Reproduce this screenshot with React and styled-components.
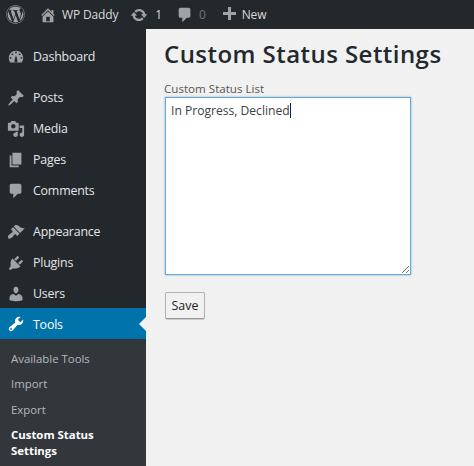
import React from "react";
import styled, { createGlobalStyle } from "styled-components";
import { FaWordpress } from "react-icons/fa";

const Global = createGlobalStyle`
  html, body { margin: 0; padding: 0; background: #f1f1f1; }
  body { font-family: "Open Sans", "Noto Sans", "Liberation Sans", sans-serif; }
  * { box-sizing: border-box; }
`;

const Page = styled.div`
  width: 474px; height: 466px; overflow: hidden;
  display: flex; flex-direction: column; background: #f1f1f1;
`;
const TopBar = styled.header`
  height: 29px; flex: none; background: #23282d; color: #d8d9da;
  display: flex; align-items: center; padding-left: 6px;
  font-size: 12px; letter-spacing: -0.15px;
`;
const BarItem = styled.div`
  display: flex; align-items: center; gap: ${p => p.$gap ?? 5}px;
  margin-left: ${p => p.$ml ?? 0}px; color: ${p => p.$dim ? "#6f7478" : "#d8d9da"};
  svg { color: #9ea3a8; flex: none; }
`;
const Body = styled.div`
  flex: 1; display: flex; min-height: 0;
`;
const Sidebar = styled.nav`
  width: 146px; flex: none; background: #23282d; padding-top: 11px;
  display: flex; flex-direction: column;
`;
const MenuGroup = styled.div`
  display: flex; flex-direction: column;
  margin-bottom: ${p => p.$mb ?? 10}px;
`;
const MenuItem = styled.div`
  position: relative;
  height: 31px;
  display: flex; align-items: center;
  padding: ${p => p.$active ? 1 : 2}px 0 0 7px;
  font-size: 12.4px; letter-spacing: -0.2px;
  color: ${p => p.$active ? "#fff" : "#e4e5e6"};
  background: ${p => p.$active ? "#0073aa" : "transparent"};
`;
const IconBox = styled.span`
  width: 26px; flex: none; display: flex; align-items: center; justify-content: flex-start;
  color: ${p => p.$active ? "#fff" : "#9ea3a8"};
`;
const Arrow = styled.span`
  position: absolute; right: 0; top: 50%; margin-top: -7px;
  border: 7px solid transparent; border-right-color: #f1f1f1; border-left-width: 0;
`;
const SubMenu = styled.div`
  background: #32373c; flex: 1; padding: 12px 11px 0;
  display: flex; flex-direction: column;
  font-size: 11.4px;
`;
const SubItem = styled.div`
  line-height: 16px; margin-bottom: 9.4px;
  color: ${p => p.$current ? "#fff" : "#b4b9be"};
  font-weight: ${p => p.$current ? 700 : 400};
`;
const Main = styled.main`
  flex: 1; min-width: 0; padding: 10px 0 0 18px; color: #23282d;
`;
const Title = styled.h1`
  margin: 0; font-size: 24px; font-weight: 600; line-height: 30px; letter-spacing: 0.45px;
`;
const Label = styled.label`
  display: block; margin-top: 11px; font-size: 11.6px; line-height: 17px; color: #555;
`;
const TextArea = styled.div`
  width: 246px; height: 178px; margin-left: 1px; background: #fff;
  border: 1px solid #6aa8dc; box-shadow: 0 0 2px rgba(30,140,190,.6);
  padding: 3px 5px; font-size: 12.1px; line-height: 19px; color: #3c4146;
  position: relative;
`;
const Caret = styled.span`
  display: inline-block; width: 1px; height: 15px; background: #222; vertical-align: -3px;
`;
const Grip = styled.svg`
  position: absolute; right: 0; bottom: 0;
`;
const SaveButton = styled.button`
  display: block; margin: 17px 0 0 1px; width: 40px; height: 27px; padding: 0;
  background: #f1f1f1; border: 1px solid #b0b0b0; border-bottom-color: #999; border-radius: 2px;
  font: 12.4px "Open Sans", sans-serif; color: #222;
  box-shadow: 0 1px 0 #ccc;
`;

const paths = {
  dashboard: "M3.76 16h12.48c1.1-1.37 1.76-3.11 1.76-5 0-4.42-3.58-8-8-8s-8 3.58-8 8c0 1.89.66 3.63 1.76 5zM10 4c.55 0 1 .45 1 1s-.45 1-1 1-1-.45-1-1 .45-1 1-1zM6 6c.55 0 1 .45 1 1s-.45 1-1 1-1-.45-1-1 .45-1 1-1zm8 0c.55 0 1 .45 1 1s-.45 1-1 1-1-.45-1-1 .45-1 1-1zm-5.37 9.62c-.57-.66-.17-3.4 1.37-7.62 1.54 4.22 1.94 6.96 1.37 7.62-.35.41-1.04.38-1.37-.1-.33.48-1.02.51-1.37.1zM4 10c.55 0 1 .45 1 1s-.45 1-1 1-1-.45-1-1 .45-1 1-1zm12 0c.55 0 1 .45 1 1s-.45 1-1 1-1-.45-1-1 .45-1 1-1z",
  post: "M10.44 3.02l1.82-1.82 6.36 6.35-1.83 1.82c-1.05-.68-2.48-.57-3.41.36l-.75.75c-.92.93-1.04 2.35-.35 3.41l-1.83 1.82-2.41-2.41-2.8 2.79c-.42.42-3.38 2.71-3.8 2.29s1.86-3.39 2.28-3.81l2.79-2.79L4.1 9.36l1.83-1.82c1.05.69 2.48.57 3.4-.36l.75-.75c.93-.92 1.05-2.35.36-3.41z",
  media: "M13 11V4c0-.55-.45-1-1-1h-1.67L9 1H5L3.67 3H2c-.55 0-1 .45-1 1v7c0 .55.45 1 1 1h10c.55 0 1-.45 1-1zM7 4.5c1.38 0 2.5 1.12 2.5 2.5S8.38 9.5 7 9.5 4.5 8.38 4.5 7 5.62 4.5 7 4.5zM14 6h5v10.5c0 1.38-1.12 2.5-2.5 2.5S14 17.88 14 16.5s1.12-2.5 2.5-2.5c.17 0 .34.02.5.05V9h-3V6zm-4 8.05V13h2v3.5c0 1.38-1.12 2.5-2.5 2.5S7 17.88 7 16.5 8.12 14 9.5 14c.17 0 .34.02.5.05z",
  page: "M6 15V2h10v13H6zm-1 1h8v2H3V5h2v11z",
  comment: "M5 2h9c1.1 0 2 .9 2 2v7c0 1.1-.9 2-2 2h-2l-5 5v-5H5c-1.1 0-2-.9-2-2V4c0-1.1.9-2 2-2z",
  appearance: "M14.48 11.06L7.41 3.99l1.5-1.5c.5-.56 2.3-.47 3.51.32 1.21.8 1.43 1.28 2.91 2.1 1.18.64 2.45 1.26 4.45.85zm-.71.71L6.7 4.7 4.93 6.47c-.39.39-.39 1.02 0 1.41l1.06 1.06c.39.39.39 1.03 0 1.42-.6.6-1.43 1.11-2.21 1.69-.35.26-.7.53-1.01.84C1.43 13.23.5 15.23 1.53 17.2c.95.95 2.95.03 4.28-1.26.31-.31.58-.66.84-1.01.58-.78 1.09-1.61 1.69-2.21.39-.39 1.02-.39 1.41 0l1.06 1.06c.39.39 1.02.39 1.41 0z",
  plugin: "M13.11 4.36L9.87 7.6 8 5.73l3.24-3.24c.35-.34 1.05-.2 1.56.32.52.51.66 1.21.31 1.55zm-8 1.77l.91-1.12 9.01 9.01-1.19.84c-.71.71-2.63 1.16-3.82 1.16H6.14L4.9 17.26c-.59.59-1.54.59-2.12 0-.59-.58-.59-1.53 0-2.12l1.24-1.24v-3.88c0-1.13.4-3.19 1.09-3.89zm7.26 3.97l3.24-3.24c.34-.35 1.04-.21 1.55.31.52.51.66 1.21.31 1.55l-3.24 3.25z",
  users: "M10 9.25c-2.27 0-2.73-3.44-2.73-3.44C7 4.02 7.82 2 9.97 2c2.16 0 2.98 2.02 2.71 3.81 0 0-.41 3.44-2.68 3.44zm0 2.57L12.72 10c2.39 0 4.52 2.33 4.52 4.53v2.49s-3.65 1.13-7.24 1.13c-3.65 0-7.24-1.13-7.24-1.13v-2.49c0-2.25 1.94-4.48 4.47-4.48z",
  tools: "M16.68 9.77c-1.34 1.34-3.3 1.67-4.95.99l-5.41 6.52c-.99.99-2.59.99-3.58 0s-.99-2.59 0-3.57l6.52-5.42c-.68-1.65-.35-3.61.99-4.95 1.28-1.28 3.12-1.62 4.72-1.06l-2.89 2.89 2.82 2.82 2.86-2.87c.53 1.58.18 3.39-1.08 4.65zM3.81 16.21c.4.39 1.04.39 1.43 0 .4-.4.4-1.04 0-1.43-.39-.4-1.03-.4-1.43 0-.39.39-.39 1.03 0 1.43z",
  home: "M16 8.5l1.53 1.53-1.06 1.06L10 4.62l-6.47 6.47-1.06-1.06L10 2.5l4 4v-2h2v4zm-6-2.46l6 5.99V18H4v-5.97zM12 17v-5H8v5h4z",
  update: "M10.2 3.28c3.53 0 6.43 2.61 6.92 6h2.08l-3.5 4-3.5-4h2.32c-.45-1.97-2.21-3.44-4.32-3.44-1.45 0-2.73.71-3.54 1.78L4.95 5.66C6.23 4.2 8.11 3.28 10.2 3.28zm-.4 13.44c-3.52 0-6.43-2.61-6.92-6H.8l3.5-4c1.17 1.33 2.33 2.67 3.5 4H5.48c.45 1.97 2.21 3.44 4.32 3.44 1.45 0 2.73-.71 3.54-1.77l1.71 1.95c-1.28 1.46-3.15 2.38-5.25 2.38z",
  plus: "M17 7v3h-5v5H9v-5H4V7h5V2h3v5h5z",
};

const Dashicon = ({ name, size = 18 }) => (
  <svg width={size} height={size} viewBox="0 0 20 20" fill="currentColor"><path d={paths[name]} /></svg>
);

const Row = ({ icon, label, active }) => (
  <MenuItem $active={active}>
    <IconBox $active={active}><Dashicon name={icon} /></IconBox>
    {label}
    {active && <Arrow />}
  </MenuItem>
);

export default function App() {
  return (
    <Page>
      <Global />
      <TopBar>
        <BarItem><FaWordpress size={19} /></BarItem>
        <BarItem $ml={14}><Dashicon name="home" size={18} />WP Daddy</BarItem>
        <BarItem $ml={12} $gap={7}><Dashicon name="update" size={18} />1</BarItem>
        <BarItem $ml={14}><Dashicon name="comment" size={18} /><BarItem $dim>0</BarItem></BarItem>
        <BarItem $ml={13} $gap={3}><Dashicon name="plus" size={20} />New</BarItem>
      </TopBar>
      <Body>
        <Sidebar>
          <MenuGroup>
            <Row icon="dashboard" label="Dashboard" />
          </MenuGroup>
          <MenuGroup>
            <Row icon="post" label="Posts" />
            <Row icon="media" label="Media" />
            <Row icon="page" label="Pages" />
            <Row icon="comment" label="Comments" />
          </MenuGroup>
          <MenuGroup $mb={0}>
            <Row icon="appearance" label="Appearance" />
            <Row icon="plugin" label="Plugins" />
            <Row icon="users" label="Users" />
            <Row icon="tools" label="Tools" active />
          </MenuGroup>
          <SubMenu>
            <SubItem>Available Tools</SubItem>
            <SubItem>Import</SubItem>
            <SubItem>Export</SubItem>
            <SubItem $current>Custom Status Settings</SubItem>
          </SubMenu>
        </Sidebar>
        <Main>
          <Title>Custom Status Settings</Title>
          <Label>Custom Status List</Label>
          <TextArea>
            In Progress, Declined<Caret />
            <Grip width="9" height="9" viewBox="0 0 9 9" stroke="#777" fill="none"><path d="M1 8 8 1M5 8l3-3"/></Grip>
          </TextArea>
          <SaveButton>Save</SaveButton>
        </Main>
      </Body>
    </Page>
  );
}
